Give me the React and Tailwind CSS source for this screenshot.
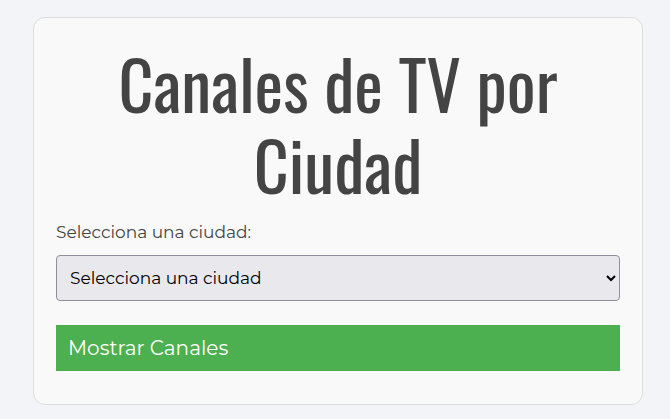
export default function App() {
  return (
    <div className="min-h-screen w-full bg-[#f3f4f8] pt-[17px] pl-[33px] font-['Montserrat','Open_Sans',sans-serif]">
      <div className="flex h-[388px] w-[610px] flex-col rounded-[12px] border border-[#dcdcdc] bg-[#f9f9f9] px-[22px]">
        <h1 className="mt-[24px] text-center font-['Oswald','DejaVu_Sans_Condensed',sans-serif] text-[68px] leading-[81px] text-[#444]">
          Canales de TV por Ciudad
        </h1>
        <label className="mt-[18px] text-[17px] leading-[20px] text-[#444]">Selecciona una ciudad:</label>
        <select className="mt-[13px] h-[46px] w-full rounded-[4px] border border-[#8f8f9d] bg-[#e9e9ed] pl-[9px] pr-[13px] text-[17px] text-black">
          <option>Selecciona una ciudad</option>
        </select>
        <button className="mt-[24px] h-[46px] w-full bg-[#4caf50] px-[12px] text-left text-[20px] text-white">
          Mostrar Canales
        </button>
      </div>
    </div>
  );
}
